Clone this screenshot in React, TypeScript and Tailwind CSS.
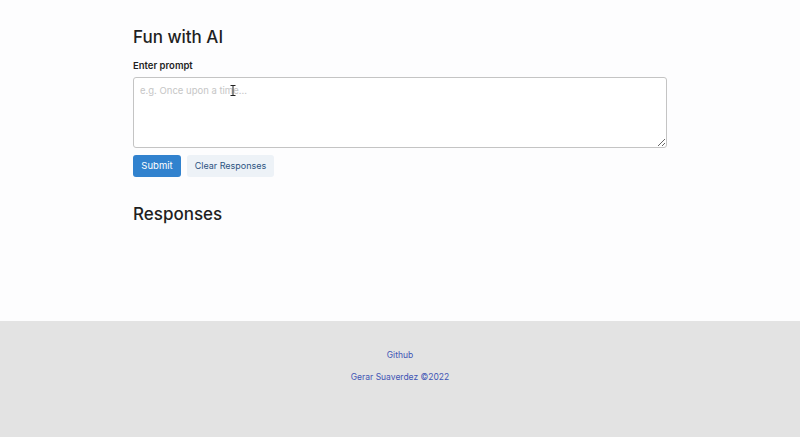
import { useState } from 'react';

export default function App() {
  const [prompt, setPrompt] = useState('');

  return (
    <div className="flex min-h-[437px] flex-col bg-[#fdfdfe] font-['Inter',_'Liberation_Sans',_sans-serif] text-[#1f1f1f]">
      <main className="flex h-[321px] justify-center">
        <div className="w-[534px] pt-[26px]">
          <h1 className="text-[17px] leading-[22px] font-medium">Fun with AI</h1>
          <label className="mt-[12px] block text-[9.5px] leading-[12px] font-semibold">Enter prompt</label>
          <div className="relative mt-[5px]">
            <textarea
              value={prompt}
              onChange={(e) => setPrompt(e.target.value)}
              placeholder="e.g. Once upon a time..."
              className="block h-[71px] w-full resize-y rounded-[3px] border border-[#c4c4c4] bg-white px-[6px] py-[7px] text-[9.5px] leading-[12px] placeholder:text-[#c6c6c6] focus:outline-none"
            />
            <svg className="pointer-events-none absolute left-[97px] top-[8px]" width="6" height="11" viewBox="0 0 6 11">
              <path d="M0.5 0.5h5M3 0.5v10M0.5 10.5h5" stroke="#222" strokeWidth="1" fill="none" />
            </svg>
          </div>
          <div className="mt-[7px] flex gap-[6px]">
            <button className="h-[22px] w-[48px] rounded-[3px] bg-[#3182ce] text-[9.5px] text-white">Submit</button>
            <button className="h-[22px] w-[87px] rounded-[3px] bg-[#edf2f7] text-[9px] text-[#2c5282]">Clear Responses</button>
          </div>
          <h2 className="mt-[26px] text-[17px] leading-[22px] font-medium">Responses</h2>
        </div>
      </main>
      <footer className="flex flex-1 flex-col items-center bg-[#e3e3e3] pt-[28px] text-[8.5px] leading-[12px] text-[#3f55b5]">
        <a href="#">Github</a>
        <p className="mt-[10px]">Gerar Suaverdez ©2022</p>
      </footer>
    </div>
  );
}
